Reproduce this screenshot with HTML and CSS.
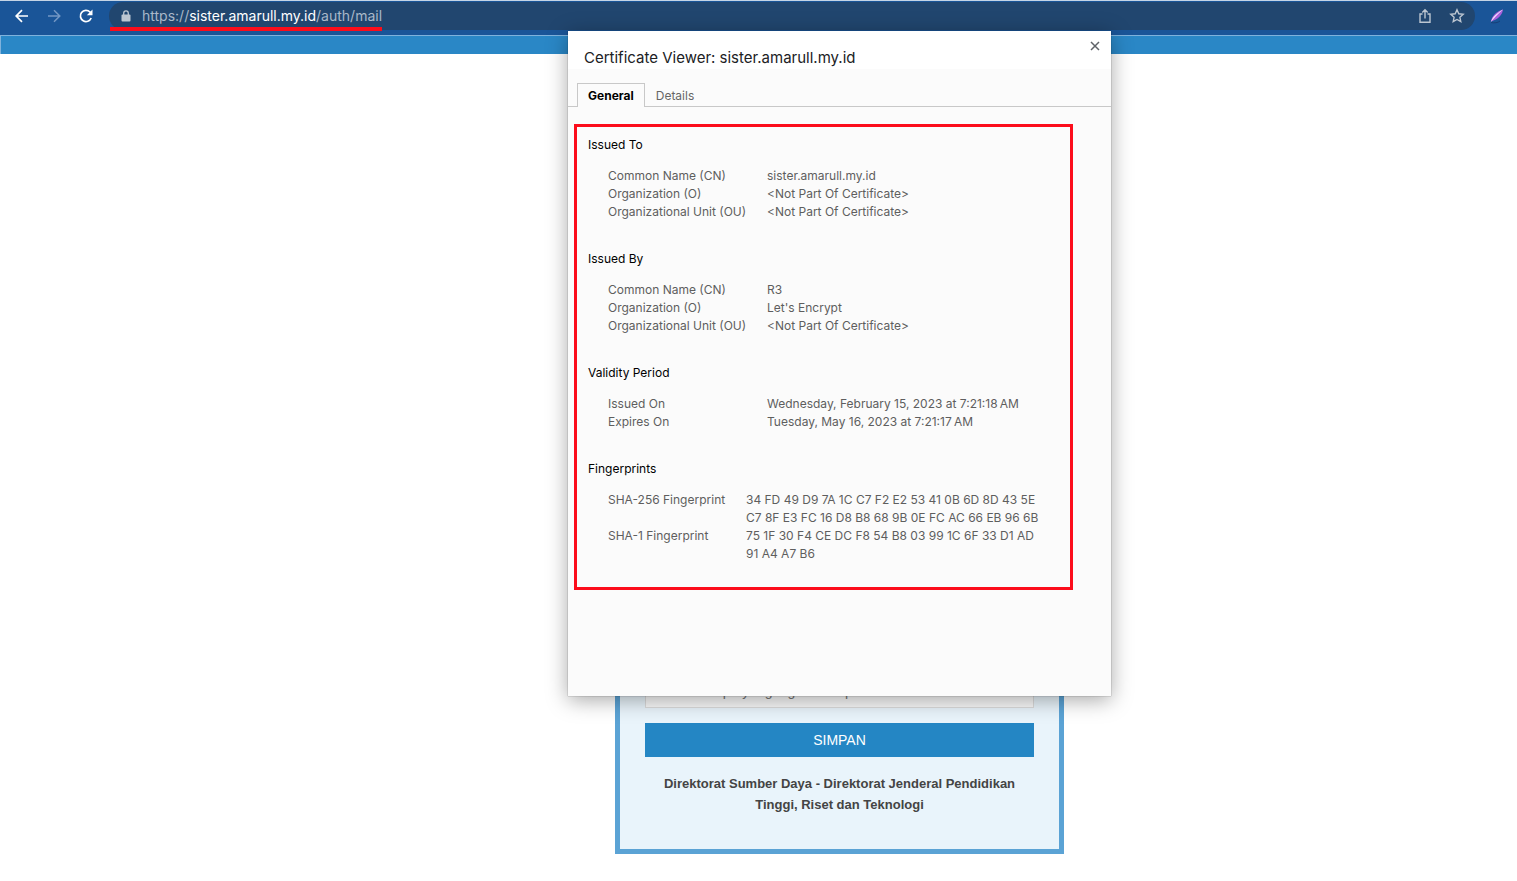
FILE: index.html
```
<!DOCTYPE html>
<html lang="id">
<head>
    <meta charset="UTF-8">
    <meta name="viewport" content="width=device-width, initial-scale=1.0">
    <title>sister.amarull.my.id</title>
    <link rel="stylesheet" href="styles.css">
</head>
<body>
    <header class="toolbar">
        <button class="nav-btn" type="button" aria-label="Back">
            <svg width="16" height="16" viewBox="0 0 16 16"><path d="M14 8H2.500M8 2.200 2.200 8 8 13.800"/></svg>
        </button>
        <button class="nav-btn faded" type="button" aria-label="Forward">
            <svg width="16" height="16" viewBox="0 0 16 16"><path d="M2 8h11.500M8 2.200 13.800 8 8 13.800"/></svg>
        </button>
        <button class="nav-btn" type="button" aria-label="Reload">
            <svg width="16" height="16" viewBox="0 0 16 16"><path d="M13.200 10A5.600 5.600 0 1 1 12 4l1.500 1.500"/><path class="solid" d="M14.500 1.500v5.700H8.800z"/></svg>
        </button>
        <div class="address-bar">
            <div class="address">
                <svg class="lock" width="10" height="12" viewBox="0 0 10 12"><path d="M2.700 5V3.200a2.300 2.300 0 0 1 4.600 0V5" fill="none" stroke="#bcc6d1" stroke-width="1.300"/><rect x="0.500" y="4.500" width="9" height="7" rx="1" fill="#bcc6d1"/></svg>
                <a class="url" href="#">https://<span class="host">sister.amarull.my.id</span>/auth/mail</a>
            </div>
            <button class="bar-btn" type="button" aria-label="Share">
                <svg width="16" height="16" viewBox="0 0 16 16"><path d="M5.500 6H3v8.300h10V6h-2.500M8 10.500V2M5.300 4.500 8 1.800l2.700 2.700"/></svg>
            </button>
            <button class="bar-btn" type="button" aria-label="Bookmark">
                <svg width="16" height="16" viewBox="0 0 16 16"><path d="m8 1.800 1.800 4 4.400.5-3.300 3 .9 4.400L8 11.500l-3.800 2.200.9-4.400-3.300-3 4.400-.5z"/></svg>
            </button>
        </div>
        <button class="ext-btn" type="button" aria-label="Extension">
            <svg width="16" height="16" viewBox="0 0 16 16">
                <path d="M2 14.500c3 .8 7 .3 9-1.500" fill="none" stroke="#173f78" stroke-width="1"/>
                <path d="M2 13.500C2.500 8 8 3 14 1.500c-.5 5-5 10-12 12z" fill="#a95fdc"/>
                <path d="M1.500 14.500C5 10 9 6 14 1.500 10.500 3.500 5 7.500 3.200 11z" fill="#f3e3fb"/>
            </svg>
        </button>
    </header>
    <div class="top-strip"></div>

    <main class="page">
        <form class="card">
            <input class="field" type="text" aria-label="Email" placeholder="Email siapa yang digunakan pada saat mendaftar">
            <button class="submit" type="button">SIMPAN</button>
            <p class="footer-text">Direktorat Sumber Daya - Direktorat Jenderal Pendidikan Tinggi, Riset dan Teknologi</p>
        </form>
    </main>

    <div class="overlay">
        <div class="dialog" role="dialog" aria-labelledby="dialog-title">
            <div class="dialog-header">
                <h1 id="dialog-title">Certificate Viewer: sister.amarull.my.id</h1>
                <button class="close" type="button" aria-label="Close">
                    <svg width="10" height="10" viewBox="0 0 10 10"><path d="m1 1 8 8M9 1 1 9"/></svg>
                </button>
            </div>
            <div class="tabs" role="tablist">
                <button class="tab active" type="button" role="tab" aria-selected="true">General</button>
                <button class="tab" type="button" role="tab" aria-selected="false">Details</button>
            </div>
            <div class="highlight">
                <section>
                    <h2>Issued To</h2>
                    <table>
                        <tr><th scope="row">Common Name (CN)</th><td>sister.amarull.my.id</td></tr>
                        <tr><th scope="row">Organization (O)</th><td>&lt;Not Part Of Certificate&gt;</td></tr>
                        <tr><th scope="row">Organizational Unit (OU)</th><td>&lt;Not Part Of Certificate&gt;</td></tr>
                    </table>
                </section>
                <section>
                    <h2>Issued By</h2>
                    <table>
                        <tr><th scope="row">Common Name (CN)</th><td>R3</td></tr>
                        <tr><th scope="row">Organization (O)</th><td>Let's Encrypt</td></tr>
                        <tr><th scope="row">Organizational Unit (OU)</th><td>&lt;Not Part Of Certificate&gt;</td></tr>
                    </table>
                </section>
                <section>
                    <h2>Validity Period</h2>
                    <table>
                        <tr><th scope="row">Issued On</th><td>Wednesday, February 15, 2023 at 7:21:18&#8239;AM</td></tr>
                        <tr><th scope="row">Expires On</th><td>Tuesday, May 16, 2023 at 7:21:17&#8239;AM</td></tr>
                    </table>
                </section>
                <section>
                    <h2>Fingerprints</h2>
                    <table class="fingerprints">
                        <tr><th scope="row">SHA-256 Fingerprint</th><td>34 FD 49 D9 7A 1C C7 F2 E2 53 41 0B 6D 8D 43 5E<br>C7 8F E3 FC 16 D8 B8 68 9B 0E FC AC 66 EB 96 6B</td></tr>
                        <tr><th scope="row">SHA-1 Fingerprint</th><td>75 1F 30 F4 CE DC F8 54 B8 03 99 1C 6F 33 D1 AD<br>91 A4 A7 B6</td></tr>
                    </table>
                </section>
            </div>
        </div>
    </div>
</body>
</html>
```

FILE: styles.css
```
:root {
    --toolbar-bg: #1a5598;
    --bar-bg: #21466f;
    --primary: #2486c4;
    --card-bg: #e9f4fb;
    --card-border: #5ba3d5;
    --mark: #fc0d1b;
    --line: #c8c8c8;
}

* {
    margin: 0;
    padding: 0;
    box-sizing: border-box;
}

body {
    position: relative;
    min-height: 100vh;
    background: #fff;
    font-family: Inter, "Noto Sans", sans-serif;
    font-size: 12px;
    line-height: 18px;
}

button {
    border: none;
    background: none;
    font-family: inherit;
    cursor: pointer;
}

/* Browser toolbar */
.toolbar {
    display: flex;
    align-items: flex-start;
    height: 36px;
    padding: 1px 12px 0 14px;
    background: var(--toolbar-bg);
    border-top: 1px solid #c5d4e5;
    border-bottom: 1px solid #7fb2dc;
}

.nav-btn {
    width: 16px;
    height: 28px;
    margin-right: 16px;
}

.nav-btn:nth-of-type(3) {
    margin-right: 15px;
}

.toolbar svg,
.close svg {
    display: block;
    margin: auto;
    fill: none;
    stroke: #fff;
    stroke-width: 1.7;
}

.toolbar .faded svg {
    stroke: #7397c4;
    stroke-width: 1.5;
}

.toolbar .solid {
    fill: #fff;
    stroke: none;
}

.address-bar {
    flex: 1;
    display: flex;
    align-items: center;
    height: 28px;
    padding: 0 10px 0 12px;
    background: var(--bar-bg);
    border-radius: 14px;
}

.address {
    position: relative;
    display: flex;
    align-items: center;
    gap: 11px;
    height: 28px;
    margin-right: auto;
}

/* red line under the address */
.address::after {
    content: "";
    position: absolute;
    left: -11px;
    right: 0;
    bottom: -1px;
    height: 4px;
    background: var(--mark);
}

.toolbar .lock {
    margin: 0;
    stroke: none;
}

.url {
    color: #a9b8c9;
    font-size: 14px;
    text-decoration: none;
}

.host {
    color: #fff;
}

.bar-btn {
    width: 16px;
    margin-left: 16px;
}

.toolbar .bar-btn svg {
    stroke: #bcc6d1;
    stroke-width: 1.4;
}

.toolbar .ext-btn {
    width: 16px;
    height: 28px;
    margin-left: 14px;
}

.toolbar .ext-btn svg {
    stroke: none;
}

.top-strip {
    height: 18px;
    background: #2a87c6;
    border-left: 1px solid #7fb2dc;
}

/* Page behind the dialog */
.page {
    display: flex;
    justify-content: center;
    padding: 576px 0 24px 162px;
}

.card {
    display: flex;
    flex-direction: column;
    width: 449px;
    padding: 39px 25px 34px;
    background: var(--card-bg);
    border: 5px solid var(--card-border);
    font-family: "Liberation Sans", Arial, sans-serif;
}

.field {
    height: 34px;
    padding: 0 20px;
    background: #fafafa;
    border: 1px solid #ddd;
    font-family: inherit;
    font-size: 14px;
}

.field::placeholder {
    color: #777;
}

.submit {
    height: 34px;
    margin: 15px 0 16px;
    background: var(--primary);
    color: #fff;
    font-size: 14px;
}

.footer-text {
    color: #444;
    font-size: 13px;
    font-weight: bold;
    line-height: 21px;
    text-align: center;
}

/* Certificate dialog */
.overlay {
    position: absolute;
    top: 31px;
    left: 162px;
    right: 0;
    display: flex;
    justify-content: center;
}

.dialog {
    width: 543px;
    padding-bottom: 106px;
    background: #fbfbfb;
    box-shadow: 0 0 1px rgba(0, 0, 0, 0.5), 0 4px 20px rgba(0, 0, 0, 0.35);
}

.dialog-header {
    display: flex;
    justify-content: space-between;
    align-items: flex-start;
    padding: 10px 11px 1px 16px;
    background: #fff;
}

.dialog-header h1 {
    padding-top: 7px;
    color: #202124;
    font-size: 15px;
    font-weight: 400;
    line-height: 20px;
}

.close {
    width: 10px;
    height: 10px;
}

.close svg {
    stroke: #5f6368;
    stroke-width: 1.5;
}

.tabs {
    display: flex;
    padding: 14px 9px 0;
    border-bottom: 1px solid var(--line);
}

.tab {
    height: 23px;
    padding: 0 10px;
    border: 1px solid transparent;
    border-bottom: none;
    color: #666;
    font-size: 12px;
}

.tab.active {
    height: 24px;
    margin-bottom: -1px;
    background: #fbfbfb;
    border-color: var(--line);
    color: #000;
    font-weight: 700;
}

.highlight {
    margin: 17px 38px 0 6px;
    padding: 9px 11px 24px;
    border: 3px solid var(--mark);
}

section + section {
    margin-top: 29px;
}

h2 {
    margin-bottom: 13px;
    color: #000;
    font-size: 12px;
    font-weight: 400;
}

table {
    margin-left: 20px;
    border-collapse: collapse;
    color: #5e5e5e;
}

th {
    width: 159px;
    font-weight: 400;
    text-align: left;
    vertical-align: top;
}

.fingerprints th {
    width: 138px;
}

td {
    white-space: nowrap;
}
```
